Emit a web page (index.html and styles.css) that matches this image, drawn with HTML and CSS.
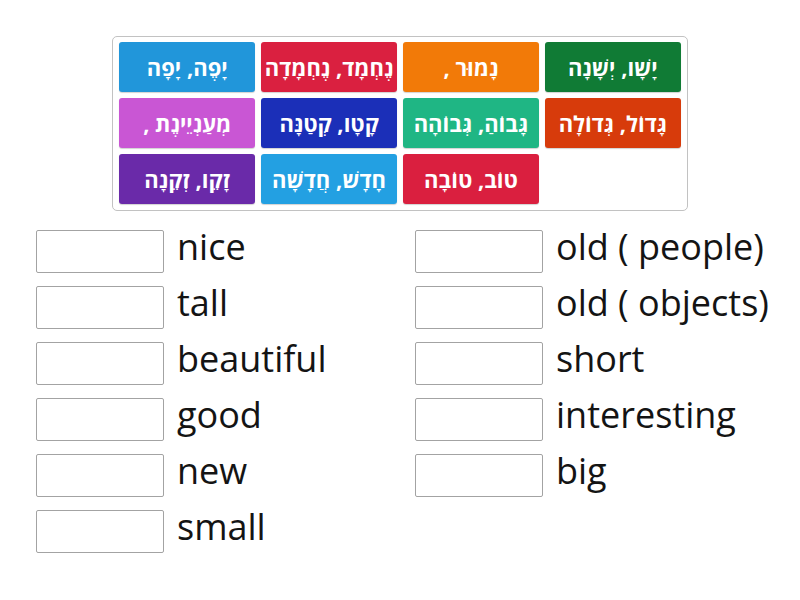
FILE: index.html
```html
<!DOCTYPE html>
<html lang="en">
<head>
<meta charset="utf-8">
<title>Match up</title>
<link rel="stylesheet" href="styles.css">
</head>
<body>
<div class="page">
  <div class="bank">
    <div class="tile blue" dir="rtl">יָפֶה, יָפָה</div>
    <div class="tile red" dir="rtl">נֶחְמָד, נֶחְמָדָה</div>
    <div class="tile orange" dir="rtl">נָמוּר ,</div>
    <div class="tile green" dir="rtl">יָשָׁו, יְשָׁנָה</div>
    <div class="tile pink" dir="rtl">מְעַנְיֵינֶת ,</div>
    <div class="tile navy" dir="rtl">קָטָו, קְטַנָּה</div>
    <div class="tile teal" dir="rtl">גָּבוֹהַ, גְּבוֹהָה</div>
    <div class="tile rust" dir="rtl">גָּדוֹל, גְּדוֹלָה</div>
    <div class="tile purple" dir="rtl">זָקֵו, זְקֵנָה</div>
    <div class="tile sky" dir="rtl">חָדָשׁ, חֲדָשָׁה</div>
    <div class="tile red2" dir="rtl">טוֹב, טוֹבָה</div>
  </div>
  <div class="answers">
    <div class="col">
      <div class="row"><div class="slot"></div><span class="label">nice</span></div>
      <div class="row"><div class="slot"></div><span class="label">tall</span></div>
      <div class="row"><div class="slot"></div><span class="label">beautiful</span></div>
      <div class="row"><div class="slot"></div><span class="label">good</span></div>
      <div class="row"><div class="slot"></div><span class="label">new</span></div>
      <div class="row"><div class="slot"></div><span class="label">small</span></div>
    </div>
    <div class="col">
      <div class="row"><div class="slot"></div><span class="label">old ( people)</span></div>
      <div class="row"><div class="slot"></div><span class="label">old ( objects)</span></div>
      <div class="row"><div class="slot"></div><span class="label">short</span></div>
      <div class="row"><div class="slot"></div><span class="label">interesting</span></div>
      <div class="row"><div class="slot"></div><span class="label">big</span></div>
    </div>
  </div>
</div>
</body>
</html>
```
FILE: styles.css
```css
html, body {
  margin: 0;
  padding: 0;
  background: #ffffff;
}
body {
  font-family: "Open Sans", "DejaVu Sans", sans-serif;
  color: #111111;
}
.page {
  width: 800px;
  height: 600px;
  padding-top: 36px;
  box-sizing: border-box;
}
.bank {
  margin-left: 112px;
  width: 576px;
  box-sizing: border-box;
  border: 1px solid #c2c2c2;
  border-radius: 5px;
  padding: 5px 6px 6px 6px;
  display: grid;
  grid-template-columns: repeat(4, 1fr);
  column-gap: 5.5px;
  row-gap: 6px;
}
.tile {
  height: 50px;
  border-radius: 3px;
  color: #ffffff;
  font-family: "Open Sans", "DejaVu Sans", sans-serif;
  font-weight: 700;
  font-size: 22px;
  display: flex;
  align-items: center;
  justify-content: center;
  white-space: nowrap;
  box-shadow: 0 1px 1px rgba(0,0,0,0.18);
}
.green { background: #107b35; }
.orange { background: #f27a08; }
.red { background: #da2040; }
.blue { background: #2196da; }
.rust { background: #d73b0b; }
.teal { background: #1fb684; }
.navy { background: #1b2fb8; }
.pink { background: #c956d4; }
.red2 { background: #da1f3f; }
.sky { background: #23a0e2; }
.purple { background: #6a2aa9; }

.answers {
  margin-top: 19px;
  margin-left: 36px;
  display: flex;
}
.col {
  width: 379px;
  display: flex;
  flex-direction: column;
  gap: 13px;
}
.row {
  display: flex;
  align-items: flex-start;
  gap: 13px;
}
.slot {
  width: 128px;
  height: 43px;
  box-sizing: border-box;
  border: 1px solid #a3a3a3;
  border-radius: 2px;
  background: #ffffff;
  flex: none;
}
.label {
  font-size: 36px;
  line-height: 33px;
  white-space: nowrap;
  color: #141414;
}
```
